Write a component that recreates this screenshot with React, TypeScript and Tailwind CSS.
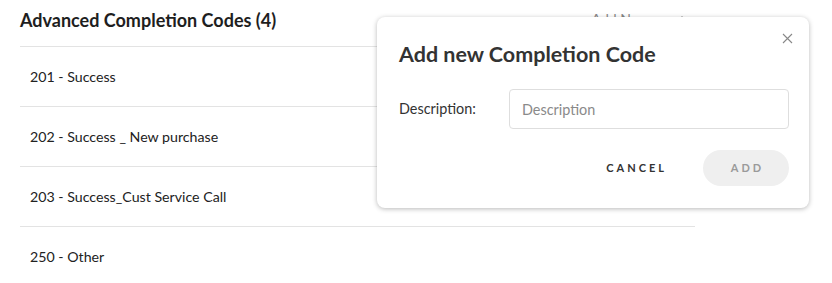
import React from "react";

const codes = [
  "201 - Success",
  "202 - Success _ New purchase",
  "203 - Success_Cust Service Call",
  "250 - Other",
];

const CompletionCodes = () => {
  return (
    <div className="ml-[20px] w-[675px]">
      {/* Header */}
      <div className="flex h-[47px] items-start justify-between border-b border-[#e3e3e3] pt-[8px]">
        <h2 className="text-[18px] font-bold leading-6 text-[#1e1e1e]">
          Advanced Completion Codes ({codes.length})
        </h2>
        <div className="mr-[8px] flex items-center gap-[28px] text-[14px] text-[#888]">
          <span>Add New</span>
          <svg width="10" height="10" viewBox="0 0 10 10" fill="#888">
            <path d="M5 2 L9 7 L1 7 Z" />
          </svg>
        </div>
      </div>

      {codes.map((code, i) => (
        <div
          key={code}
          className={`flex h-[60px] items-center pl-[10px] text-[14.2px] text-[#222] ${
            i < codes.length - 1 ? "border-b border-[#e3e3e3]" : ""
          }`}
        >
          {code}
        </div>
      ))}
    </div>
  );
};

const AddCodePopup = () => {
  return (
    <div className="absolute left-[377px] top-[17px] w-[432px] rounded-lg bg-white px-[20px] pb-[22px] pl-[22px] pt-[23px] shadow-[0_1px_5px_rgba(0,0,0,0.28)]">
      <button className="absolute right-[16px] top-[16px] text-[#888]">
        <svg width="11" height="11" viewBox="0 0 11 11" stroke="currentColor" strokeWidth="1.1">
          <path d="M1 1 L10 10 M10 1 L1 10" />
        </svg>
      </button>
      <h3 className="text-[21.5px] font-bold leading-7 text-[#333]">
        Add new Completion Code
      </h3>

      <div className="mt-[21px] flex items-center">
        <label className="w-[110px] text-[14.4px] text-[#333]">Description:</label>
        <input
          placeholder="Description"
          className="h-[40px] flex-1 rounded border border-[#dedede] px-[12px] text-[14.4px] text-[#333] outline-none placeholder:text-[#8a8a8a]"
        />
      </div>

      <div className="mt-[21px] flex items-center justify-end">
        <button className="mr-[36px] text-[11px] font-bold tracking-[3px] text-[#333]">
          CANCEL
        </button>
        <button className="h-[36px] w-[86px] rounded-full bg-[#efefef] pl-[3px] text-[11px] font-bold tracking-[3px] text-[#9a9a9a]">
          ADD
        </button>
      </div>
    </div>
  );
};

export default function App() {
  return (
    <div
      className="relative h-[283px] w-[832px] overflow-hidden bg-white"
      style={{ fontFamily: "Lato, 'Noto Sans', sans-serif" }}
    >
      <CompletionCodes />
      <AddCodePopup />
    </div>
  );
}
